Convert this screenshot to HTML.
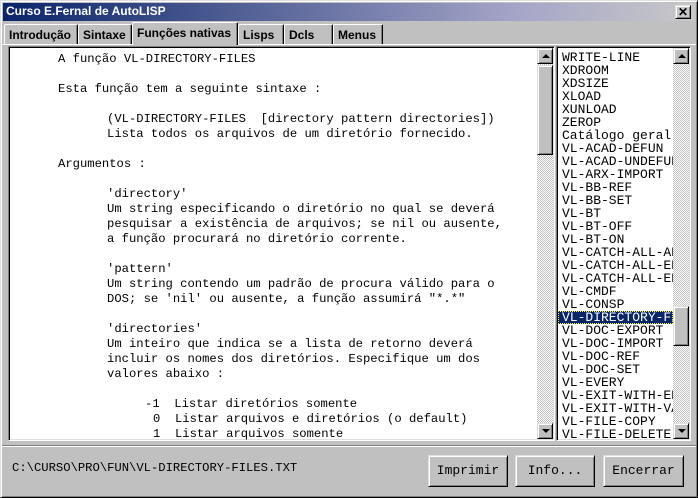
<!DOCTYPE html>
<html><head><meta charset="utf-8"><style>
*{margin:0;padding:0;box-sizing:border-box}
body{width:698px;height:498px;background:#c0c0c0;position:relative;overflow:hidden;font-family:"Liberation Sans",sans-serif}
.a{position:absolute}
.out{border:1px solid;border-color:#dfdfdf #000 #000 #dfdfdf;box-shadow:inset 1px 1px #fff,inset -1px -1px #808080}
.in{border:1px solid;border-color:#808080 #fff #fff #808080;box-shadow:inset 1px 1px #000,inset -1px -1px #dfdfdf}
.tab{position:absolute;top:24px;height:20px;border:1px solid;border-bottom:none;border-color:#fff #000 #000 #fff;box-shadow:inset -1px 0 #808080;font-weight:bold;font-size:12px;padding:3px 0 0 4px;background:#c0c0c0;border-radius:2px 2px 0 0}
.txt{font-family:"Liberation Mono",monospace;font-size:12.2px;line-height:15px;white-space:pre;color:#000}
.ln{position:absolute}
.list div{height:13px;line-height:13px;font-family:"Liberation Mono",monospace;font-size:13px;padding-left:4px;white-space:pre;overflow:hidden}
.sb{background:repeating-conic-gradient(#c0c0c0 0 25%,#fff 0 50%) 0 0/2px 2px}
.btn{position:absolute;width:16px;height:16px;background:#c0c0c0}
.arr{position:absolute;left:4px;width:0;height:0;border-left:4px solid transparent;border-right:4px solid transparent}
.pb{position:absolute;top:455px;height:32px;font-family:"Liberation Mono",monospace;font-size:13px;text-align:center;line-height:29px;background:#c0c0c0}
</style></head><body>
<div class="a out" style="left:0;top:0;width:698px;height:498px"></div>
<div class="a" style="left:3px;top:3px;width:692px;height:18px;background:linear-gradient(90deg,#0a246a,#a6a6c8 75%,#c8c8c8)"></div>
<div class="a" style="left:6px;top:4px;color:#fff;font-weight:bold;font-size:12px">Curso E.Fernal de AutoLISP</div>
<div class="a out" style="left:675px;top:5px;width:16px;height:14px;font-size:12px;font-weight:bold;text-align:center;line-height:12px">✕</div>

<div class="tab" style="left:4px;width:74px">Introdução</div>
<div class="tab" style="left:78px;width:54px">Sintaxe</div>
<div class="tab" style="left:238px;width:46px">Lisps</div>
<div class="tab" style="left:284px;width:49px">Dcls</div>
<div class="tab" style="left:333px;width:50px">Menus</div>
<div class="a" style="left:2px;top:44px;width:694px;height:1px;background:#fff"></div>
<div class="tab" style="left:132px;top:22px;height:23px;width:106px;padding-top:3px">Funções nativas</div>

<div class="a in" style="left:8px;top:46px;width:547px;height:395px;background:#fff"></div>
<div class="a txt" style="left:0;top:52px;width:537px;height:388px;overflow:hidden">
<div class="ln" style="left:58px;top:0">A função VL-DIRECTORY-FILES</div>
<div class="ln" style="left:58px;top:30px">Esta função tem a seguinte sintaxe :</div>
<div class="ln" style="left:107px;top:60px">(VL-DIRECTORY-FILES  [directory pattern directories])</div>
<div class="ln" style="left:107px;top:75px">Lista todos os arquivos de um diretório fornecido.</div>
<div class="ln" style="left:58px;top:105px">Argumentos :</div>
<div class="ln" style="left:107px;top:135px">'directory'</div>
<div class="ln" style="left:107px;top:150px">Um string especificando o diretório no qual se deverá</div>
<div class="ln" style="left:107px;top:165px">pesquisar a existência de arquivos; se nil ou ausente,</div>
<div class="ln" style="left:107px;top:180px">a função procurará no diretório corrente.</div>
<div class="ln" style="left:107px;top:210px">'pattern'</div>
<div class="ln" style="left:107px;top:225px">Um string contendo um padrão de procura válido para o</div>
<div class="ln" style="left:107px;top:240px">DOS; se 'nil' ou ausente, a função assumirá "*.*"</div>
<div class="ln" style="left:107px;top:270px">'directories'</div>
<div class="ln" style="left:107px;top:285px">Um inteiro que indica se a lista de retorno deverá</div>
<div class="ln" style="left:107px;top:300px">incluir os nomes dos diretórios. Especifique um dos</div>
<div class="ln" style="left:107px;top:315px">valores abaixo :</div>
<div class="ln" style="left:145px;top:345px">-1  Listar diretórios somente</div>
<div class="ln" style="left:153px;top:360px">0  Listar arquivos e diretórios (o default)</div>
<div class="ln" style="left:153px;top:375px">1  Listar arquivos somente</div>
</div>
<div class="a sb" style="left:537px;top:48px;width:16px;height:391px"></div>
<div class="btn out" style="left:537px;top:48px"><div class="arr" style="top:5px;border-bottom:4px solid #000"></div></div>
<div class="btn out" style="left:537px;top:65px;height:90px"></div>
<div class="btn out" style="left:537px;top:423px"><div class="arr" style="top:5px;border-top:4px solid #000"></div></div>

<div class="a in" style="left:556px;top:46px;width:135px;height:395px;background:#fff"></div>
<div class="a list" style="left:558px;top:51px;width:115px;height:389px;overflow:hidden">
<div>WRITE-LINE</div><div>XDROOM</div><div>XDSIZE</div><div>XLOAD</div><div>XUNLOAD</div><div>ZEROP</div><div>Catálogo geral</div><div>VL-ACAD-DEFUN</div><div>VL-ACAD-UNDEFUN</div><div>VL-ARX-IMPORT</div><div>VL-BB-REF</div><div>VL-BB-SET</div><div>VL-BT</div><div>VL-BT-OFF</div><div>VL-BT-ON</div><div>VL-CATCH-ALL-APPLY</div><div>VL-CATCH-ALL-ERROR</div><div>VL-CATCH-ALL-ERROR</div><div>VL-CMDF</div><div>VL-CONSP</div><div style="background:#0a246a;color:#fff;outline:1px dotted #ff0;outline-offset:-1px">VL-DIRECTORY-FILES</div><div>VL-DOC-EXPORT</div><div>VL-DOC-IMPORT</div><div>VL-DOC-REF</div><div>VL-DOC-SET</div><div>VL-EVERY</div><div>VL-EXIT-WITH-ERROR</div><div>VL-EXIT-WITH-VALUE</div><div>VL-FILE-COPY</div><div>VL-FILE-DELETE</div>
</div>
<div class="a sb" style="left:673px;top:48px;width:16px;height:391px"></div>
<div class="btn out" style="left:673px;top:48px"><div class="arr" style="top:5px;border-bottom:4px solid #000"></div></div>
<div class="btn out" style="left:673px;top:306px;height:40px"></div>
<div class="btn out" style="left:673px;top:423px"><div class="arr" style="top:5px;border-top:4px solid #000"></div></div>

<div class="a" style="left:2px;top:445px;width:694px;height:1px;background:#808080"></div>
<div class="a" style="left:2px;top:446px;width:694px;height:1px;background:#fff"></div>
<div class="a" style="left:12px;top:461px;font-family:'Liberation Mono',monospace;font-size:12.2px">C:\CURSO\PRO\FUN\VL-DIRECTORY-FILES.TXT</div>
<div class="pb out" style="left:428px;width:80px">Imprimir</div>
<div class="pb out" style="left:515px;width:80px">Info...</div>
<div class="pb out" style="left:603px;width:81px">Encerrar</div>
</body></html>
